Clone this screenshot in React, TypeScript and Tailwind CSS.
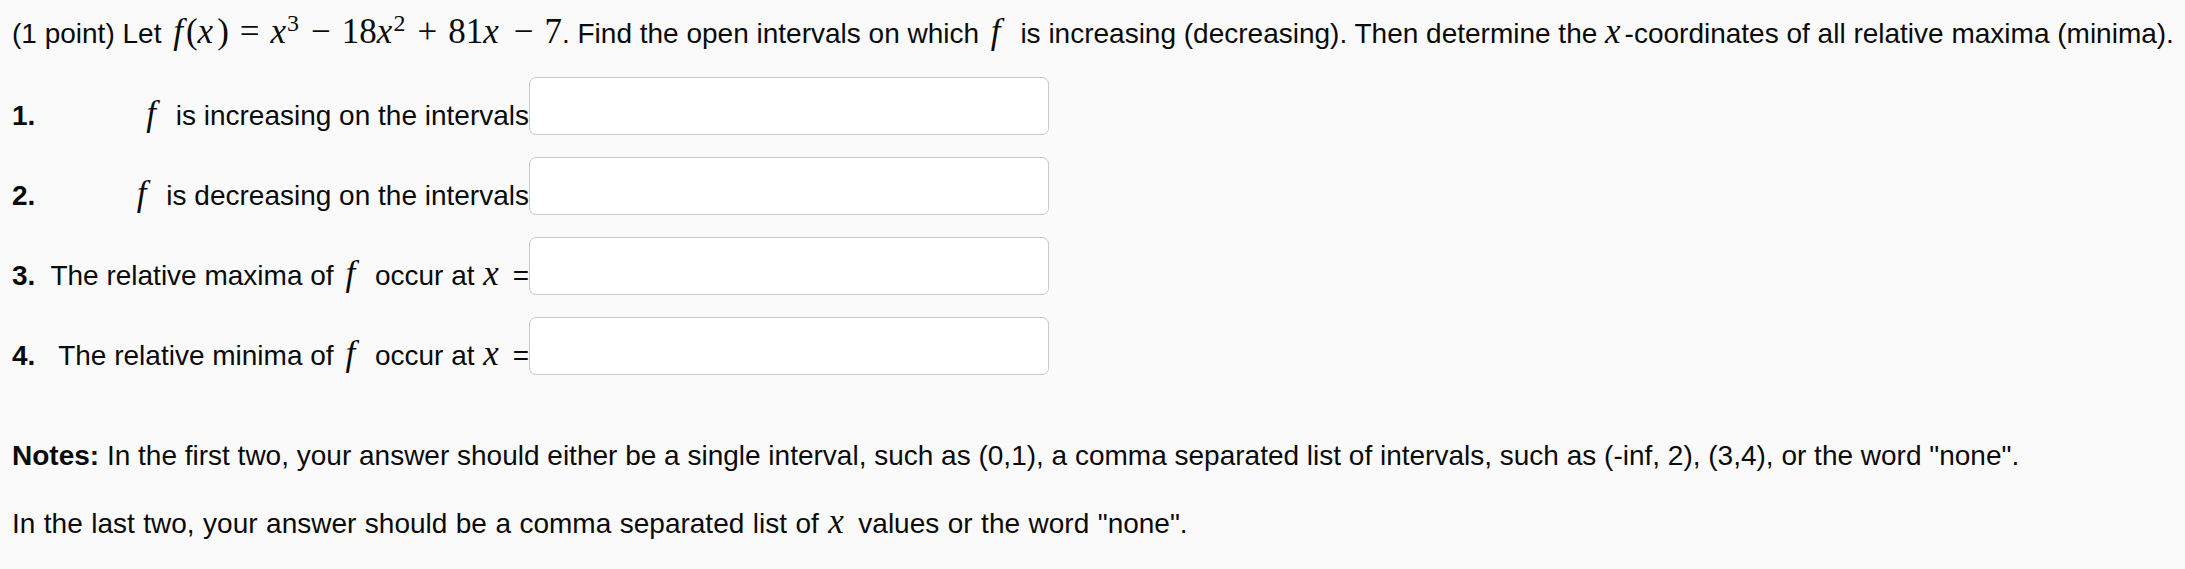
import React from "react";

const M = ({ children }: { children: React.ReactNode }) => (
  <span className="font-['Liberation_Serif',serif] text-[35px] leading-none">{children}</span>
);

const F = ({ tight = false }: { tight?: boolean }) => (
  <i className={tight ? "italic inline-block ml-[4px] mr-[3px]" : "italic inline-block ml-[4px] mr-[12px]"}>f</i>
);
const X = ({ wide = false }: { wide?: boolean }) => (
  <i className={wide ? "italic inline-block ml-[1px] mr-[6px]" : "italic inline-block mr-[4px]"}>x</i>
);

const Op = ({ children }: { children: React.ReactNode }) => (
  <span className="mx-[11px]">{children}</span>
);

const Sup = ({ children }: { children: React.ReactNode }) => (
  <sup className="text-[24px] -ml-[3px] mr-[1px]">{children}</sup>
);

const Box = () => (
  <input
    type="text"
    className="w-[520px] h-[58px] shrink-0 bg-white border-[1.5px] border-[#c8c8c8] rounded-[7px] outline-none"
  />
);

function Row({ num, label }: { num: string; label: React.ReactNode }) {
  return (
    <div className="flex items-end">
      <div className="w-[517px] flex justify-between items-baseline leading-[32px] mb-[3px]">
        <span className="font-bold">{num}</span>
        <span className="whitespace-nowrap">{label}</span>
      </div>
      <Box />
    </div>
  );
}

export default function App() {
  return (
    <div className="min-h-[569px] w-[2185px] bg-[#fafafa] text-[#0b0b0b] font-['Liberation_Sans',Arial,sans-serif] text-[28px] pl-[12px] pt-[14px]">
      <p className="leading-[32px] h-[32px] whitespace-nowrap">
        (1 point) Let{" "}
        <M>
          <F tight />(<X />)<Op>=</Op>
          <X />
          <Sup>3</Sup>
          <Op>−</Op>18<X />
          <Sup>2</Sup>
          <Op>+</Op>81<X />
          <Op>−</Op>7
        </M>
        . Find the open intervals on which{" "}
        <M>
          <F />
        </M>{" "}
        is increasing (decreasing). Then determine the{" "}
        <M>
          <X />
        </M>
        -coordinates of all relative maxima (minima).
      </p>

      <div className="mt-[31px] flex flex-col gap-[22px]">
        <Row
          num="1."
          label={
            <>
              <M>
                <F />
              </M>{" "}
              is increasing on the intervals
            </>
          }
        />
        <Row
          num="2."
          label={
            <>
              <M>
                <F />
              </M>{" "}
              is decreasing on the intervals
            </>
          }
        />
        <Row
          num="3."
          label={
            <>
              The relative maxima of{" "}
              <M>
                <F />
              </M>{" "}
              occur at{" "}
              <M>
                <X wide />
              </M>{" "}
              =
            </>
          }
        />
        <Row
          num="4."
          label={
            <>
              The relative minima of{" "}
              <M>
                <F />
              </M>{" "}
              occur at{" "}
              <M>
                <X wide />
              </M>{" "}
              =
            </>
          }
        />
      </div>

      <p className="mt-[65px] leading-[32px] h-[32px] whitespace-nowrap">
        <b className="font-bold">Notes:</b> In the first two, your answer should either be a single interval, such as
        (0,1), a comma separated list of intervals, such as (-inf, 2), (3,4), or the word "none".
      </p>
      <p className="mt-[32px] leading-[32px] h-[32px] whitespace-nowrap [word-spacing:0.7px]">
        In the last two, your answer should be a comma separated list of{" "}
        <M>
          <X wide />
        </M>{" "}
        values or the word "none".
      </p>
    </div>
  );
}
